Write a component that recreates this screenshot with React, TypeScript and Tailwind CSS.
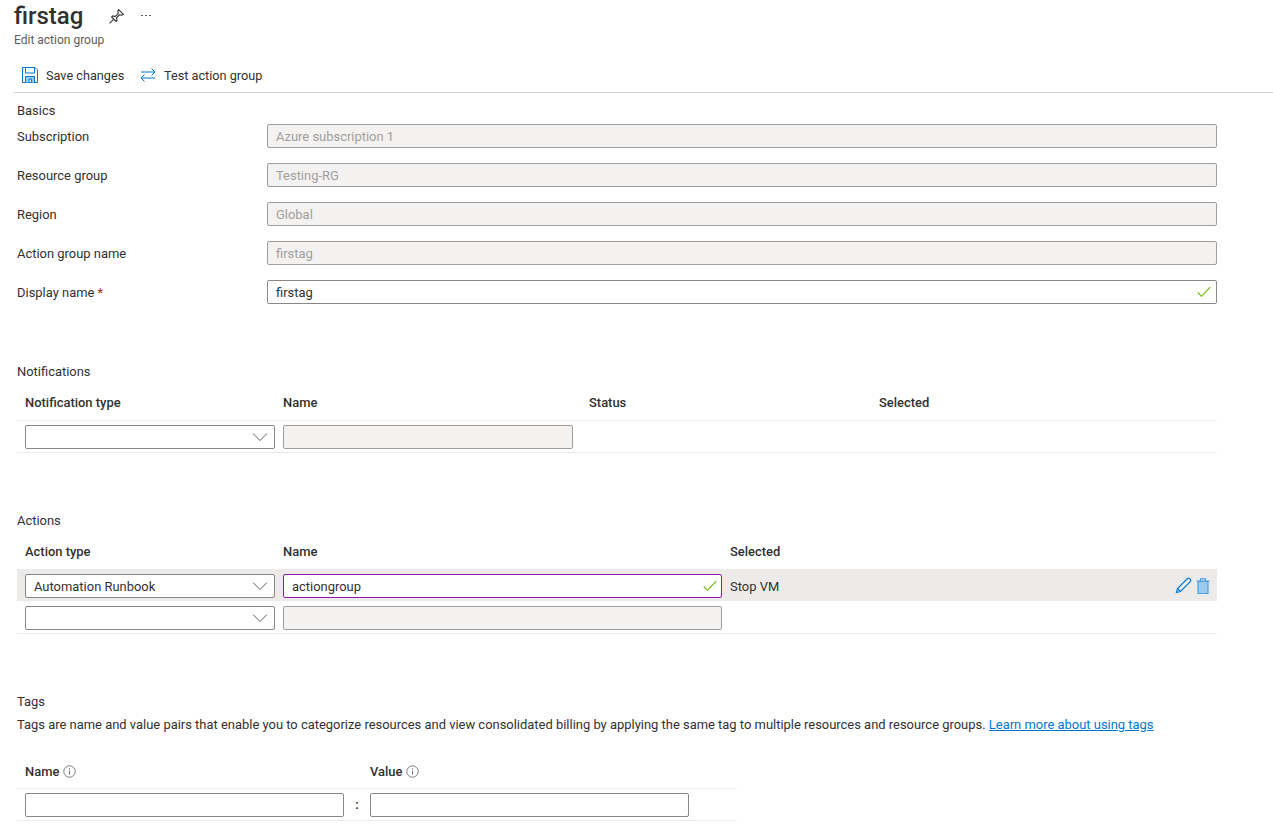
import React from "react";

const font = { fontFamily: 'Roboto, "Open Sans", sans-serif' };

function Chevron() {
  return (
    <svg width="16" height="16" viewBox="0 0 16 16" fill="none" stroke="#605e5c" strokeWidth="1" className="shrink-0">
      <path d="M1 4.5 L8 11.5 L15 4.5" />
    </svg>
  );
}

function Check() {
  return (
    <svg width="14" height="12" viewBox="0 0 14 12" fill="none" stroke="#6bb700" strokeWidth="1.1" className="shrink-0">
      <path d="M0.8 6.5 L4.5 10.3 L13.2 1.2" />
    </svg>
  );
}

function Info() {
  return (
    <svg width="13" height="13" viewBox="0 0 13 13" fill="none" className="shrink-0">
      <circle cx="6.5" cy="6.5" r="5.7" stroke="#605e5c" strokeWidth="0.8" />
      <path d="M6.5 5.6 V9.6" stroke="#605e5c" strokeWidth="0.9" />
      <circle cx="6.5" cy="3.9" r="0.6" fill="#605e5c" />
    </svg>
  );
}

function Select({ value, className = "" }: { value?: string; className?: string }) {
  return (
    <div className={`h-6 w-[250px] shrink-0 bg-white border border-[#8a8886] rounded-[2px] flex items-center justify-between pl-2 pr-[6px] ${className}`}>
      <span className="text-[12.95px] pt-[2px] text-[#323130] whitespace-nowrap">{value}</span>
      <Chevron />
    </div>
  );
}

function Disabled({ value, className = "" }: { value?: string; className?: string }) {
  return (
    <div className={`h-6 bg-[#f3f2f1] border border-[#a19f9d] rounded-[2px] flex items-center pl-2 pt-[2px] text-[12.95px] text-[#a19f9d] ${className}`}>
      {value}
    </div>
  );
}

function BasicRow({ label, value }: { label: string; value: string }) {
  return (
    <div className="flex items-center h-6 mb-[15px]">
      <div className="w-[250px] pt-[2px] text-[12.95px] text-[#323130]">{label}</div>
      <Disabled value={value} className="w-[950px]" />
    </div>
  );
}

export default function App() {
  return (
    <div style={font} className="w-[1273px] h-[837px] bg-white overflow-hidden text-[#323130] text-[12.95px]">
      <div className="pl-[14px] h-[51px]">
        <div className="flex items-center h-[29px]">
          <span className="text-[24px] leading-[29px] pt-[4px] font-medium text-[#323130] w-[94px]">firstag</span>
          <svg width="17" height="17" viewBox="0 0 16 16" fill="none" stroke="#323130" strokeWidth="1" className="mt-[3px]">
            <path d="M10 1.5 L14.5 6 L13 6.7 L10.7 6.4 L8 9.2 L8.6 11.6 L7.6 12.6 L3.4 8.4 L4.4 7.4 L6.8 8 L9.6 5.3 L9.3 3 Z" />
            <path d="M5.3 10.7 L1.5 14.5" />
          </svg>
          <span className="ml-[16px] flex gap-[2px] mt-[2px]">
            <i className="block w-[2px] h-[1.5px] bg-[#605e5c]" />
            <i className="block w-[2px] h-[1.5px] bg-[#605e5c]" />
            <i className="block w-[2px] h-[1.5px] bg-[#605e5c]" />
          </span>
        </div>
        <div className="text-[12px] leading-[16px] mt-[3px] text-[#605e5c]">Edit action group</div>
      </div>

      <div className="ml-[14px] h-[42px] border-b border-[#d2d0ce] flex items-center text-[12.7px] pl-[8px] pt-[8px]">
        <svg width="16" height="16" viewBox="0 0 16 16" fill="none" stroke="#0078d4" strokeWidth="1" className="mt-[-2px]">
          <path d="M0.5 0.5 H13 L15.5 3 V15.5 H0.5 Z" />
          <path d="M3.5 0.5 V6 H12.5 V0.5" />
          <path d="M3.5 15.5 V9.5 H12.5 V15.5" fill="#9fcdf0" />
          <path d="M7 12 H9.5 V15.5 H7 Z" fill="#fff" />
        </svg>
        <span className="ml-[8px] w-[94px] whitespace-nowrap">Save changes</span>
        <svg width="16" height="16" viewBox="0 0 16 16" fill="none" stroke="#0078d4" strokeWidth="1" className="mt-[-2px]">
          <path d="M1 5 H15 M11.5 1.5 L15 5 L11.5 8.5" />
          <path d="M15 11 H1 M4.5 7.5 L1 11 L4.5 14.5" />
        </svg>
        <span className="ml-[8px] whitespace-nowrap">Test action group</span>
      </div>

      <div className="pl-[17px] w-[1217px]">
        <div className="leading-[18px] mt-[9px] mb-[4px]">Basics</div>
        <BasicRow label="Subscription" value="Azure subscription 1" />
        <BasicRow label="Resource group" value="Testing-RG" />
        <BasicRow label="Region" value="Global" />
        <BasicRow label="Action group name" value="firstag" />
        <div className="flex items-center h-6">
          <div className="w-[250px] pt-[2px]">
            Display name <span className="text-[#a4262c]">*</span>
          </div>
          <div className="w-[950px] h-6 border border-[#8a8886] rounded-[2px] flex items-center justify-between pl-2 pr-[5px]">
            <span className="pt-[2px]">firstag</span>
            <Check />
          </div>
        </div>

        <div className="leading-[18px] mt-[59px]">Notifications</div>
        <div className="flex items-center h-[40px] border-b border-[#edebe9] pl-2 pt-[5px] font-medium">
          <div className="w-[258px]">Notification type</div>
          <div className="w-[306px]">Name</div>
          <div className="w-[290px]">Status</div>
          <div>Selected</div>
        </div>
        <div className="flex items-center h-[32px] border-b border-[#edebe9] pl-2 pt-[1px]">
          <Select />
          <Disabled className="ml-2 w-[290px]" />
        </div>

        <div className="leading-[18px] mt-[59px]">Actions</div>
        <div className="flex items-center h-[39px] pl-2 pt-[5px] font-medium">
          <div className="w-[258px]">Action type</div>
          <div className="w-[447px]">Name</div>
          <div>Selected</div>
        </div>
        <div className="flex items-center h-[32px] bg-[#edebe9] pl-2 pr-[7px] pt-[1px]">
          <Select value="Automation Runbook" />
          <div className="ml-2 w-[439px] h-6 bg-white border border-[#8a1fa5] rounded-[2px] flex items-center justify-between pl-2 pr-[4px]">
            <span className="pt-[2px]">actiongroup</span>
            <Check />
          </div>
          <span className="ml-2 pt-[2px]">Stop VM</span>
          <svg width="17" height="17" viewBox="0 0 17 17" fill="none" stroke="#0078d4" strokeWidth="1.2" className="ml-auto mr-[1px]">
            <path d="M1.5 15.5 L2.5 11.5 L12.5 1.5 Q14 0.8 15.3 2 Q16.2 3.2 15.5 4.5 L5.5 14.5 Z" />
            <path d="M2.5 11.5 L5.5 14.5" />
          </svg>
          <svg width="14" height="16" viewBox="0 0 14 16" fill="none" stroke="#4ba0e0" strokeWidth="1.2" className="ml-[3px]">
            <path d="M2 3.5 H12 V15.5 H2 Z" fill="#9cc9ee" />
            <path d="M0.5 3 H13.5 M4.5 3 V0.8 H9.5 V3" />
          </svg>
        </div>
        <div className="flex items-center h-[33px] border-b border-[#edebe9] pl-2 pt-[1px]">
          <Select />
          <Disabled className="ml-2 w-[439px]" />
        </div>

        <div className="leading-[18px] mt-[59px]">Tags</div>
        <div className="leading-[18px] mt-[5px] whitespace-nowrap">
          Tags are name and value pairs that enable you to categorize resources and view consolidated billing by applying the same tag to multiple resources and resource groups.{" "}
          <span className="text-[#0078d4] underline">Learn more about using tags</span>
        </div>

        <div className="w-[720px] mt-[23px]">
          <div className="flex items-center h-[32px] border-b border-[#edebe9] pl-2 pb-[1px] font-medium">
            <div className="w-[345px] flex items-center gap-[4px]">Name <Info /></div>
            <div className="flex items-center gap-[4px]">Value <Info /></div>
          </div>
          <div className="flex items-center h-[32px] border-b border-[#edebe9] pl-2">
            <div className="w-[319px] h-6 border border-[#8a8886] rounded-[2px]" />
            <div className="w-[26px] text-center font-semibold">:</div>
            <div className="w-[319px] h-6 border border-[#8a8886] rounded-[2px]" />
          </div>
        </div>
      </div>
    </div>
  );
}
